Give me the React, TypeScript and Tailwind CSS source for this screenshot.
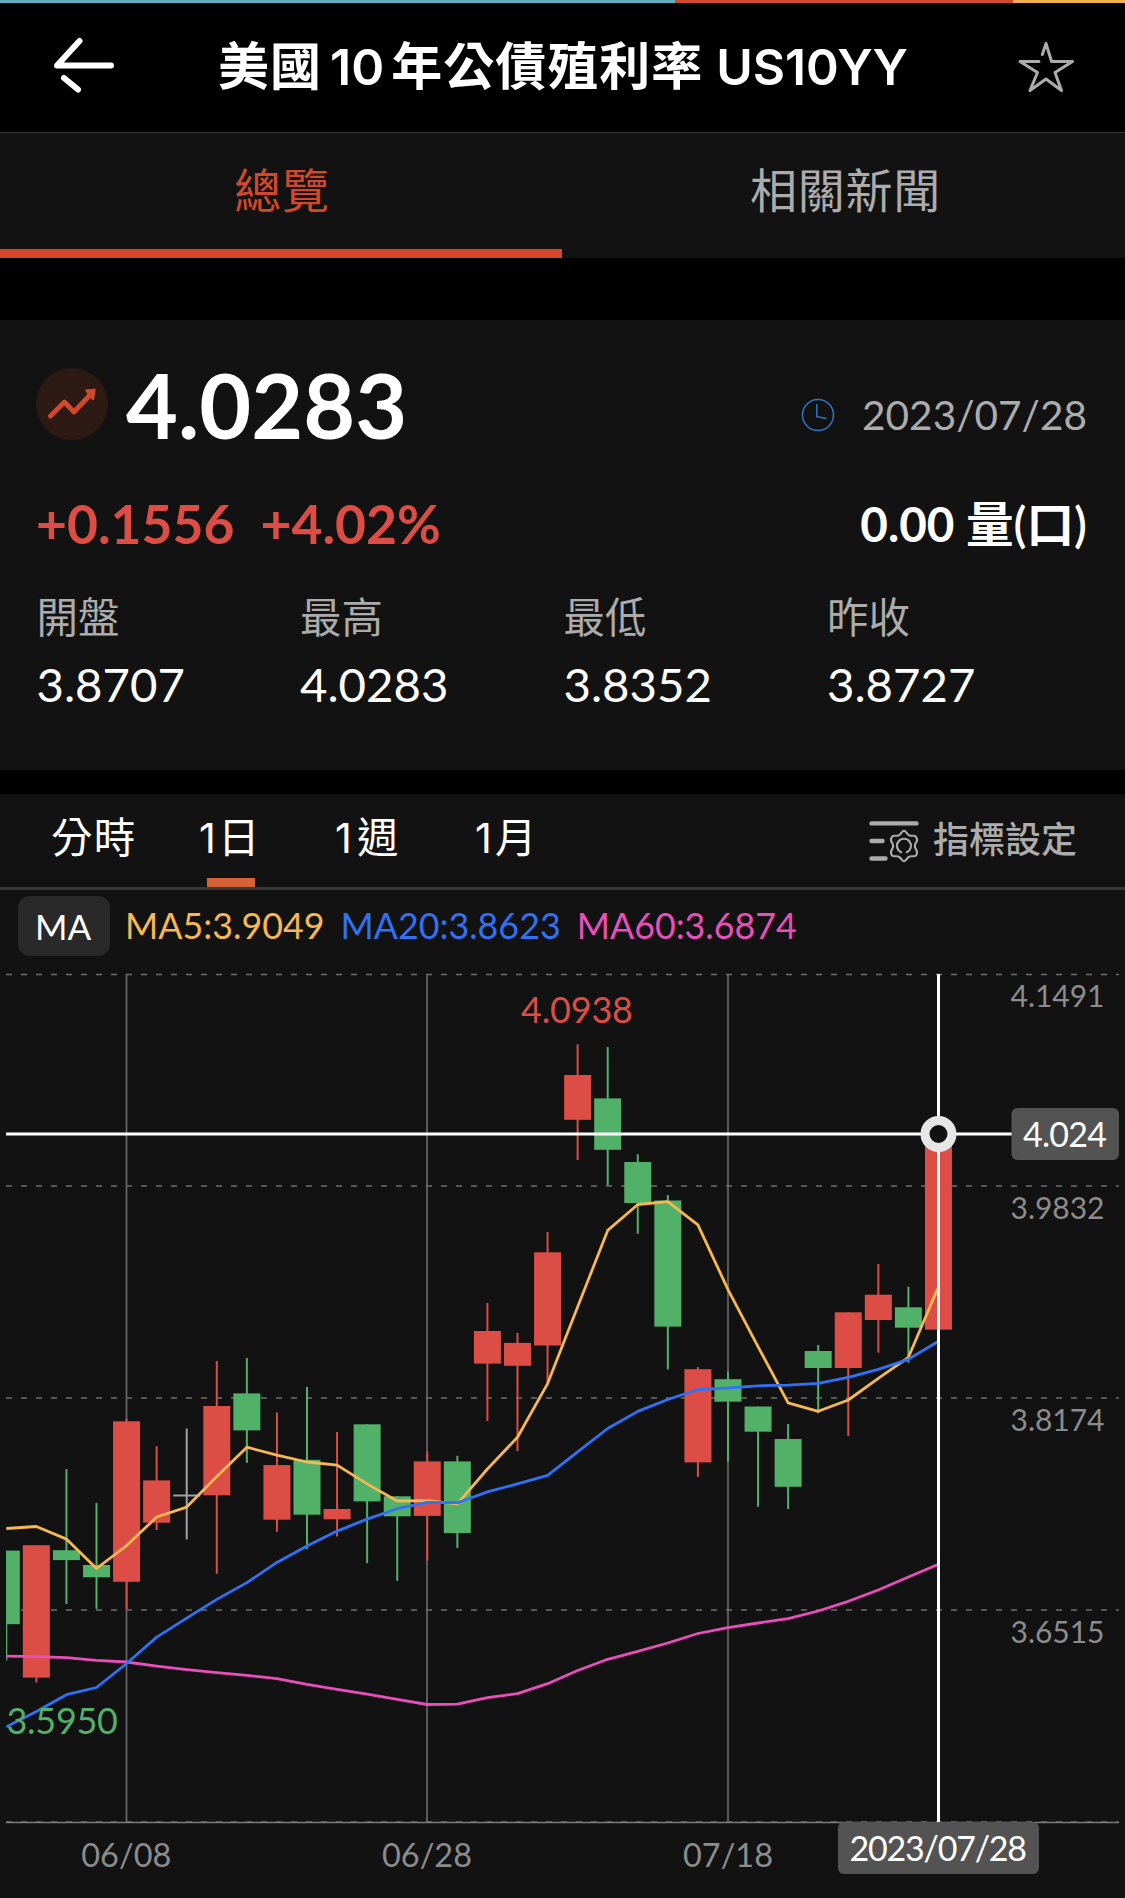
import React from "react";

type Kind = "up" | "down" | "flat";
type Candle = [Kind, number, number, number, number];

const COLORS: Record<Kind, string> = { up: "#dc4e45", down: "#51b168", flat: "#a0a0a0" };

// kind, high, body top, body bottom, low (chart pixels)
const CANDLES: Candle[] = [
  ["down", 1550.6, 1550.6, 1624.2, 1660.4],
  ["up", 1545.2, 1545.2, 1677.6, 1682.5],
  ["down", 1469, 1550.2, 1560.1, 1604],
  ["down", 1502.9, 1565, 1577.3, 1608.9],
  ["up", 1418.6, 1421.3, 1581.8, 1608.9],
  ["up", 1446.1, 1480.4, 1522.7, 1530],
  ["flat", 1428.5, 1494.5, 1496.5, 1539.5],
  ["up", 1361, 1406, 1495.3, 1573.8],
  ["down", 1358, 1393.4, 1430.4, 1462.9],
  ["up", 1412.5, 1465.1, 1519.7, 1531.9],
  ["down", 1387, 1459.8, 1514.7, 1549],
  ["up", 1432, 1509, 1519.3, 1536.5],
  ["down", 1424.3, 1424.3, 1501.4, 1563.2],
  ["down", 1496.3, 1496.3, 1516.3, 1580.8],
  ["up", 1451.4, 1461.4, 1515.9, 1560.7],
  ["down", 1455.8, 1461.4, 1533.1, 1547.9],
  ["up", 1303, 1331, 1363.6, 1421],
  ["up", 1333, 1342.9, 1365.8, 1451],
  ["up", 1232, 1252.3, 1345.5, 1385],
  ["up", 1044.3, 1075, 1119.8, 1160],
  ["down", 1047, 1098.4, 1149.8, 1185.3],
  ["down", 1154.2, 1162, 1203, 1233.8],
  ["down", 1195, 1200.5, 1326.6, 1369.5],
  ["up", 1367, 1369.2, 1462.4, 1476.8],
  ["down", 1371.8, 1379.2, 1401.7, 1461.7],
  ["down", 1406.5, 1406.5, 1431.7, 1506.8],
  ["down", 1424, 1439, 1486.8, 1509],
  ["down", 1345, 1351, 1368, 1413.3],
  ["up", 1312.3, 1312.3, 1368, 1436],
  ["up", 1264, 1294.7, 1320, 1352.7],
  ["down", 1286.7, 1307.3, 1327.7, 1362.7],
  ["up", 1134, 1134, 1329.7, 1329.7],
];

const MA5 = [1528.5, 1526.5, 1539.1, 1568.5, 1545.6, 1517, 1507.1, 1476.6, 1447.2, 1455.2, 1462, 1465.1, 1483.9, 1501, 1500.7, 1503.9, 1469, 1437.2, 1383.6, 1307, 1230.4, 1204.5, 1201.6, 1224.9, 1289.6, 1346.6, 1402.9, 1411.3, 1400, 1378.3, 1357.3, 1286.7];
const MA20 = [1726.8, 1711.5, 1694.7, 1687.5, 1663.5, 1637.1, 1618.1, 1599.4, 1582.6, 1562.4, 1546, 1531.1, 1519.1, 1508.7, 1502.3, 1502.7, 1491.9, 1483.9, 1475.4, 1451.8, 1428.5, 1411.4, 1399.5, 1389.5, 1388, 1385.8, 1385.1, 1383.3, 1377.3, 1369.3, 1359.3, 1341.3];
const MA60 = [1656.2, 1656.6, 1657.7, 1660.4, 1662, 1666.1, 1669.6, 1672.6, 1675.3, 1678.7, 1684.4, 1689.4, 1694.1, 1699.3, 1704.5, 1704.1, 1697.7, 1693.7, 1683.7, 1670.5, 1659.3, 1651.3, 1643, 1633.5, 1627.7, 1623, 1618.7, 1611, 1601.3, 1590, 1577, 1564.3];

const cx = (i: number) => 6.3 + i * 30.07;
const toPoints = (ys: number[]) => ys.map((y, i) => `${cx(i).toFixed(1)},${y}`).join(" ");

function PriceChart() {
  return (
    <svg className="block h-[937px] w-[1125px] shrink-0" viewBox="0 961 1125 937" fontFamily="Lato, sans-serif">
      <defs>
        <clipPath id="plot">
          <rect x="6" y="961" width="1113" height="937" />
        </clipPath>
      </defs>
      {[974.5, 1186, 1398, 1610, 1822].map((y) => (
        <path key={y} d={`M6 ${y}H1119`} stroke="#6f6f6f" strokeWidth="1.3" strokeDasharray="6 9" />
      ))}
      <path d="M6 1822.5H1119" stroke="#7c7c7c" strokeWidth="1.4" />
      {[126.5, 427, 728].map((x) => (
        <path key={x} d={`M${x} 974V1822`} stroke="#6c6c6c" strokeWidth="1.6" />
      ))}
      <g clipPath="url(#plot)">
        {CANDLES.map(([kind, high, top, bottom, low], i) => (
          <g key={i} fill={COLORS[kind]}>
            <rect x={cx(i) - 1} y={high} width="2" height={low - high} />
            <rect x={cx(i) - 13.5} y={top} width="27" height={bottom - top} />
          </g>
        ))}
        <g fill="none" strokeWidth="2.8" strokeLinejoin="round">
          <polyline points={toPoints(MA60)} stroke="#e94fbb" />
          <polyline points={toPoints(MA5)} stroke="#f6b754" />
          <polyline points={toPoints(MA20)} stroke="#2f72f6" />
        </g>
      </g>
      <text x="521" y="1023" fontSize="36" textLength="112" fill="#dc4e45">4.0938</text>
      <text x="6.5" y="1733.5" fontSize="36" textLength="111.5" fill="#51b168">3.5950</text>
      <g fontSize="30" fill="#8c8c8c">
        <text x="1010.5" y="1007" textLength="94">4.1491</text>
        <text x="1010.5" y="1218.5" textLength="94">3.9832</text>
        <text x="1010.5" y="1430.5" textLength="94">3.8174</text>
        <text x="1010.5" y="1642.5" textLength="94">3.6515</text>
      </g>
      <g fontSize="32.5" fill="#8c8c8c" textAnchor="middle">
        <text x="126.3" y="1867">06/08</text>
        <text x="427" y="1867">06/28</text>
        <text x="728" y="1867">07/18</text>
      </g>
      <path d="M6 1134H1012" stroke="#fff" strokeWidth="2.8" />
      <path d="M938.5 974V1822" stroke="#fff" strokeWidth="3" />
      <circle cx="938.5" cy="1134" r="13.5" fill="#111" stroke="#e6e6e6" strokeWidth="9" />
      <rect x="1011.5" y="1108" width="107.5" height="52" rx="6" fill="#535353" />
      <text x="1023" y="1147" fontSize="34" textLength="84" fill="#fff">4.024</text>
      <rect x="838" y="1822" width="201" height="52" rx="6" fill="#535353" />
      <text x="849.5" y="1861" fontSize="34" textLength="177.5" fill="#fff">2023/07/28</text>
    </svg>
  );
}

function BackIcon() {
  return (
    <svg className="-mt-[5px] h-[60px] w-[66px]" viewBox="50 35 66 60" fill="none" stroke="#fff" strokeWidth="6" strokeLinecap="round" strokeLinejoin="round">
      <path d="M111 65.5H57L79.5 41M64 78L78 89.5" />
    </svg>
  );
}

function StarIcon() {
  return (
    <svg className="-mt-[1px] ml-auto h-[56px] w-[60px]" viewBox="1016 39 60 56" fill="none" stroke="#acacac" strokeWidth="3" strokeLinecap="round" strokeLinejoin="round">
      <path d="M1042.3 54.5L1046 43.5L1051.6 61.5H1072.5L1055 72.5L1061.5 90.5L1046 79L1030 90.5L1037.5 72.5L1020 61.5H1039" />
    </svg>
  );
}

function TrendIcon() {
  return (
    <svg className="size-[72px] shrink-0" viewBox="0 0 72 72" fill="none">
      <circle cx="36" cy="36" r="36" fill="#2d1a15" />
      <path d="M14.5 48L28.5 34L38 44L54 27" stroke="#d1492a" strokeWidth="4.8" strokeLinecap="round" strokeLinejoin="round" />
      <path d="M50.5 22.5L58.5 22L57 31Z" fill="#d1492a" stroke="#d1492a" strokeWidth="2.4" strokeLinejoin="round" />
    </svg>
  );
}

function ClockIcon() {
  return (
    <svg className="size-[34px] shrink-0" viewBox="0 0 34 34" fill="none" stroke="#3176c6" strokeWidth="1.5">
      <circle cx="17" cy="17" r="15.5" />
      <path d="M15.8 6V18.7L25.5 20.5" />
    </svg>
  );
}

function IndicatorIcon() {
  return (
    <svg className="mt-[3px] h-[46px] w-[52px] shrink-0" viewBox="868 820 52 46" fill="none" stroke="#acacac" strokeLinecap="round" strokeLinejoin="round">
      <path d="M871.5 824.4H916.5M871.5 842H882.5M871.5 859.5H885.5" strokeWidth="4.4" />
      <path d="M904 831.8C906.3 831.8 906.6 835 909.2 836.3C911.8 837.7 914.4 835.6 916 837.8C919.3 842 914.8 843.5 914.8 847C914.8 850.5 919.3 852 916 856.3C914.4 858.5 911.8 856.3 909.2 857.7C906.6 859 906.3 862.2 904 862.2C901.7 862.2 901.4 859 898.8 857.7C896.2 856.3 893.6 858.5 892 856.3C888.7 852 893.2 850.5 893.2 847C893.2 843.5 888.7 842 892 837.8C893.6 835.6 896.2 837.7 898.8 836.3C901.4 835 901.7 831.8 904 831.8Z" strokeWidth="2.1" />
      <path d="M901.2 853.2A7 7 0 1 1 906.8 853.2" strokeWidth="2.1" />
    </svg>
  );
}

const STATS = [
  ["開盤", "3.8707"],
  ["最高", "4.0283"],
  ["最低", "3.8352"],
  ["昨收", "3.8727"],
];

export default function App() {
  return (
    <div className="flex h-[1898px] w-[1125px] flex-col overflow-hidden bg-black font-['Lato','Noto_Sans_CJK_TC',sans-serif] text-white">
      <div className="flex h-[3px]">
        <div className="w-[675px] bg-[#62afc2]" />
        <div className="w-[338px] bg-[#d14a2c]" />
        <div className="flex-1 bg-[#f1b04c]" />
      </div>

      <header className="flex h-[130px] items-center border-b border-[#363636] pr-[49px] pl-[50px]">
        <BackIcon />
        <h1 className="-mt-[1px] ml-[102px] flex items-baseline font-['Inter','Noto_Sans_CJK_TC',sans-serif] text-[51px] leading-[76px] font-semibold whitespace-nowrap">
          <span className="tracking-[1px]">美國</span>
          <span className="mr-[7px] ml-[8px] text-[50px]">10</span>
          <span className="tracking-[1px]">年公債殖利率</span>
          <span className="ml-[13px] text-[49.7px]">US10YY</span>
        </h1>
        <StarIcon />
      </header>

      <nav className="flex h-[125px] bg-[#121212] text-center font-['Noto_Sans_CJK_TC',sans-serif] text-[47px] leading-[109px] tracking-[0.8px]">
        <div className="w-[562px] border-b-[9px] border-[#d1492a] pl-[2px] text-[#d1492a]">總覽</div>
        <div className="flex-1 pl-[4px] text-[#acacac]">相關新聞</div>
      </nav>

      <section className="mt-[62px] flex h-[450px] flex-col bg-[#121212] pr-[38px] pl-[36px]">
        <div className="flex h-[158px] items-start pt-[48px]">
          <TrendIcon />
          <div className="ml-[18px] text-[89.6px] leading-[73px] font-bold">4.0283</div>
          <div className="ml-auto flex items-center gap-[27px] pt-[20px]">
            <ClockIcon />
            <span className="text-[40.6px] leading-[54px] text-[#acacac]">2023/07/28</span>
          </div>
        </div>
        <div className="flex h-[90px] items-center justify-between leading-[72px] font-bold">
          <div className="flex gap-[26px] text-[53.4px] text-[#dc4e45]">
            <span>+0.1556</span>
            <span>+4.02%</span>
          </div>
          <div className="pt-[2px] text-[47.6px]">
            0.00 <span className="font-semibold">量(口)</span>
          </div>
        </div>
        <div className="flex pt-[19px]">
          {STATS.map(([label, value]) => (
            <div key={label} className="w-[263.5px] shrink-0 pl-[0.5px]">
              <div className="text-[41.5px] leading-[60px] text-[#acacac]">{label}</div>
              <div className="mt-[7px] text-[47.3px] leading-[60px]">{value}</div>
            </div>
          ))}
        </div>
      </section>

      <section className="mt-[24px] flex flex-col bg-[#121212]">
        <div className="flex h-[96px] border-b-[3px] border-[#373737] font-['Inter','Noto_Sans_CJK_TC',sans-serif] text-[41.5px] leading-[88px] tracking-[1.2px]">
          <div className="ml-[51px] w-[148px]">分時</div>
          <div className="w-[136px]">
            <span className="mr-[1px]">1</span>日
            <div className="-mt-[4px] ml-[8px] h-[9px] w-[48px] bg-[#d66236]" />
          </div>
          <div className="w-[140px]">
            <span className="mr-[4px]">1</span>週
          </div>
          <div>
            <span className="mr-[2px]">1</span>月
          </div>
          <div className="mr-[48px] ml-auto flex items-center gap-[13px] text-[36px] leading-[91px] font-medium tracking-normal text-[#acacac]">
            <IndicatorIcon />
            <span>指標設定</span>
          </div>
        </div>
        <div className="flex h-[71px] items-start pt-[6px] pl-[18px] text-[35.8px] leading-[60px]">
          <div className="w-[92px] rounded-[12px] bg-[#292929] pr-[2px] text-center text-[35px]">MA</div>
          <div className="ml-[15px] text-[#f6b754]">MA5:3.9049</div>
          <div className="ml-[16px] text-[#2f72f6]">MA20:3.8623</div>
          <div className="ml-[16px] text-[#e94fbb]">MA60:3.6874</div>
        </div>
        <PriceChart />
      </section>
    </div>
  );
}
